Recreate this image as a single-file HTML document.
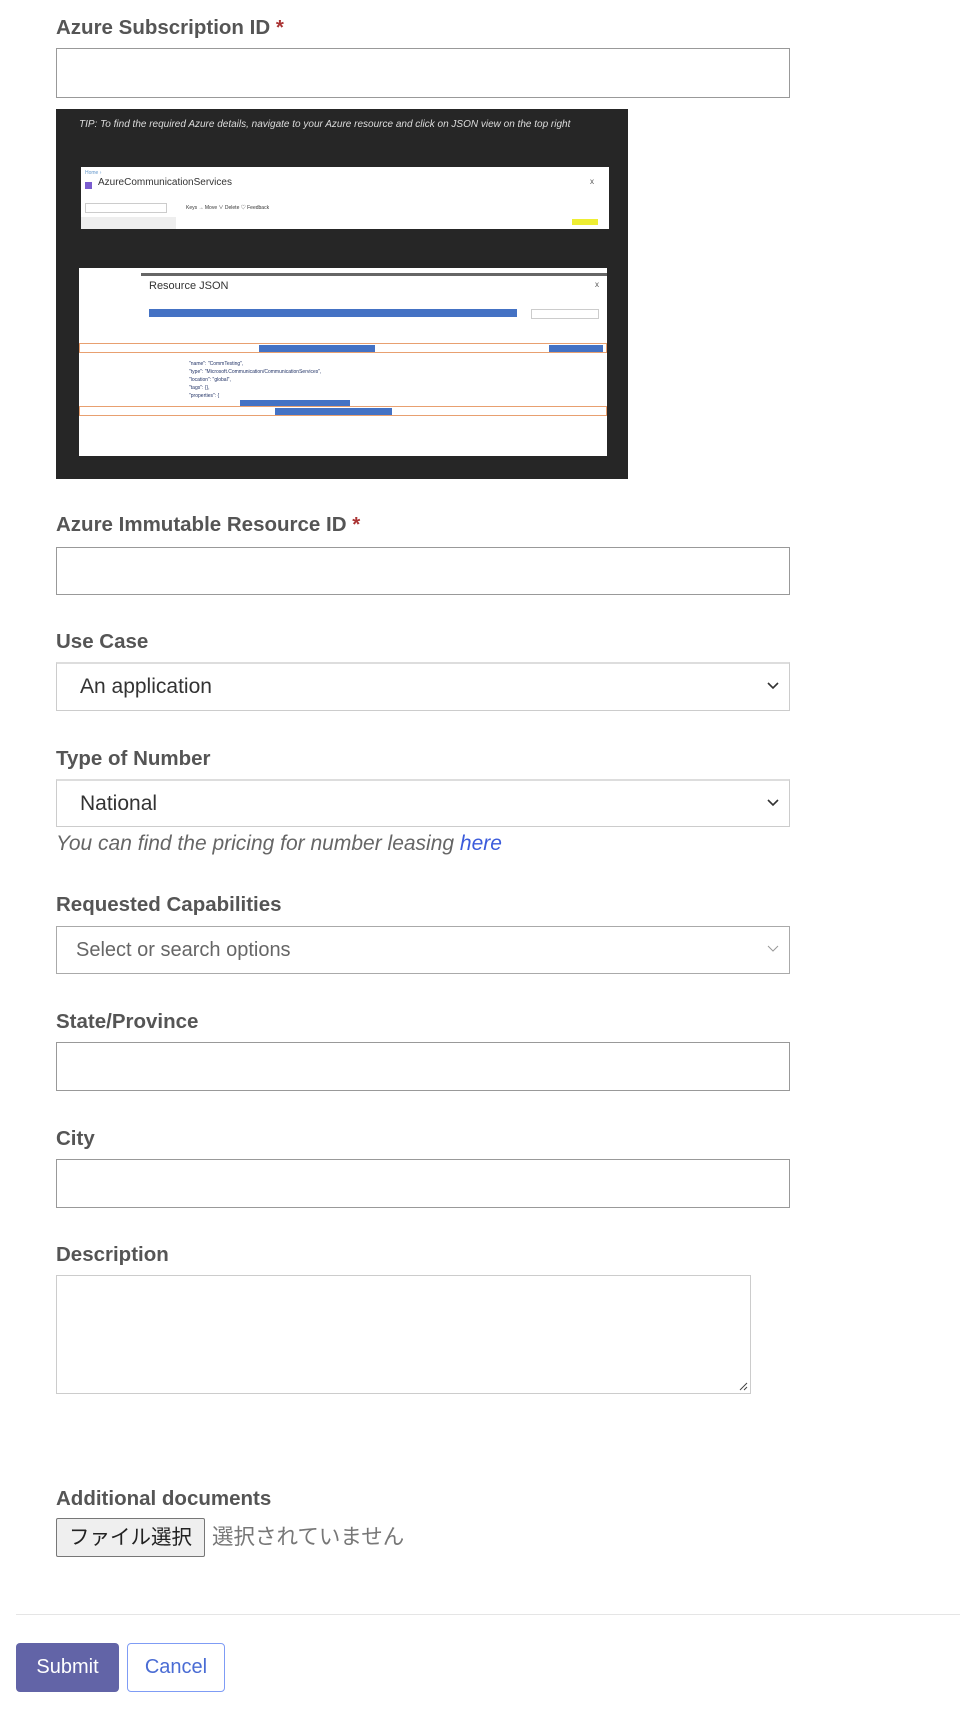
<!DOCTYPE html>
<html><head><meta charset="utf-8"><style>
body{margin:0;width:960px;height:1711px;background:#fff;position:relative;font-family:"Liberation Sans","Noto Sans CJK JP",sans-serif;overflow:hidden}
.l{position:absolute;left:56px;font-weight:bold;font-size:20.5px;color:#555;line-height:22px;margin-top:2px}
.l b{color:#a33;font-weight:bold}
.i{position:absolute;left:56px;width:734px;border:1px solid #999;box-sizing:border-box;background:#fff}
.s{border-color:#ccc;border-top:2px solid #ddd}
.t{position:absolute;left:23px;font-size:21px;color:#333}
.ch{position:absolute;right:10px;top:15px}
.abs{position:absolute}
</style></head><body>
<div class="l" style="top:15px">Azure Subscription ID <b>*</b></div>
<div class="i" style="top:48px;height:50px"></div>

<div class="abs" style="left:56px;top:109px;width:572px;height:370px;background:#262626">
  <div class="abs" style="left:23px;top:10px;color:#ddd;font-size:10px;font-style:italic">TIP: To find the required Azure details, navigate to your Azure resource and click on JSON view on the top right</div>
  <div class="abs" style="left:25px;top:58px;width:528px;height:62px;background:#fff">
    <div class="abs" style="left:4px;top:3px;font-size:5px;color:#69c">Home ›</div>
    <div class="abs" style="left:4px;top:15px;width:7px;height:7px;background:#7a5ccf"></div>
    <div class="abs" style="left:17px;top:10px;font-size:10px;color:#333">AzureCommunicationServices</div>
    <div class="abs" style="left:509px;top:10px;font-size:8px;color:#555">x</div>
    <div class="abs" style="left:4px;top:36px;width:80px;height:8px;border:1px solid #ccc"></div>
    <div class="abs" style="left:105px;top:37px;font-size:5px;color:#333">Keys → Move ∨ Delete ♡ Feedback</div>
    <div class="abs" style="left:0;top:50px;width:95px;height:12px;background:#eee"></div>
    <div class="abs" style="left:491px;top:52px;width:26px;height:6px;background:#ee3"></div>
  </div>
  <div class="abs" style="left:23px;top:159px;width:528px;height:188px;background:#fff">
    <div class="abs" style="left:62px;top:5px;width:466px;height:3px;background:#666"></div>
    <div class="abs" style="left:70px;top:12px;font-size:11px;color:#333">Resource JSON</div>
    <div class="abs" style="left:516px;top:12px;font-size:8px;color:#555">x</div>
    <div class="abs" style="left:70px;top:41px;width:368px;height:8px;background:#4472c4"></div>
    <div class="abs" style="left:452px;top:41px;width:66px;height:8px;border:1px solid #ccc"></div>
    <div class="abs" style="left:0;top:75px;width:528px;height:10px;border:1px solid #e8a070;box-sizing:border-box"></div>
    <div class="abs" style="left:180px;top:77px;width:116px;height:7px;background:#4472c4"></div>
    <div class="abs" style="left:470px;top:77px;width:54px;height:7px;background:#4472c4"></div>
    <div class="abs" style="left:0;top:138px;width:528px;height:10px;border:1px solid #e8a070;box-sizing:border-box"></div>
    <div class="abs" style="left:196px;top:140px;width:117px;height:7px;background:#4472c4"></div>
    <div class="abs" style="left:161px;top:132px;width:110px;height:6px;background:#4472c4"></div>
    <div class="abs" style="left:110px;top:92px;font-size:5px;line-height:8px;color:#236">"name": "CommTesting",<br>"type": "Microsoft.Communication/CommunicationServices",<br>"location": "global",<br>"tags": {},<br>"properties": {</div>
  </div>
</div>

<div class="l" style="top:512px">Azure Immutable Resource ID <b>*</b></div>
<div class="i" style="top:547px;height:48px"></div>

<div class="l" style="top:629px">Use Case</div>
<div class="i s" style="top:662px;height:49px"><div class="t" style="top:11px">An application</div><svg class="ch" width="12" height="12" viewBox="0 0 12 12"><path d="M1 4l5 5 5-5" fill="none" stroke="#333" stroke-width="1.6"/></svg></div>

<div class="l" style="top:746px">Type of Number</div>
<div class="i s" style="top:779px;height:48px"><div class="t" style="top:11px">National</div><svg class="ch" width="12" height="12" viewBox="0 0 12 12"><path d="M1 4l5 5 5-5" fill="none" stroke="#333" stroke-width="1.6"/></svg></div>
<div class="abs" style="left:56px;top:832px;font-size:21px;font-style:italic;color:#666">You can find the pricing for number leasing <span style="color:#3b5bdb">here</span></div>

<div class="l" style="top:892px">Requested Capabilities</div>
<div class="i" style="top:926px;height:48px;border-color:#aaa"><div class="t" style="left:19px;top:12px;font-size:20px;color:#666">Select or search options</div><svg class="ch" width="12" height="12" viewBox="0 0 12 12"><path d="M1 4l5 5 5-5" fill="none" stroke="#999" stroke-width="1"/></svg></div>

<div class="l" style="top:1009px">State/Province</div>
<div class="i" style="top:1042px;height:49px"></div>

<div class="l" style="top:1126px">City</div>
<div class="i" style="top:1159px;height:49px"></div>

<div class="l" style="top:1242px">Description</div>
<div class="i" style="top:1275px;height:119px;width:695px;border-color:#ccc"><svg class="abs" style="right:2px;bottom:2px" width="10" height="10"><path d="M9 2L2 9M9 6L6 9" stroke="#444" stroke-width="1"/></svg></div>

<div class="l" style="top:1486px">Additional documents</div>
<div class="abs" style="left:56px;top:1518px;width:149px;height:39px;box-sizing:border-box;border:1px solid #777;border-radius:2px;background:#efefef;font-size:20.5px;color:#222;text-align:center;line-height:37px">ファイル選択</div>
<div class="abs" style="left:212px;top:1525px;font-size:21.5px;color:#777;line-height:24px">選択されていません</div>

<div class="abs" style="left:16px;top:1614px;width:944px;height:1px;background:#e5e5e5"></div>
<div class="abs" style="left:16px;top:1643px;width:103px;height:49px;background:#6264a7;border-radius:4px;color:#fff;font-size:20px;text-align:center;line-height:49px">Submit</div>
<div class="abs" style="left:127px;top:1643px;width:98px;height:49px;box-sizing:border-box;border:1px solid #7f9cf5;border-radius:4px;color:#4a6cd4;font-size:20px;text-align:center;line-height:47px">Cancel</div>
</body></html>
